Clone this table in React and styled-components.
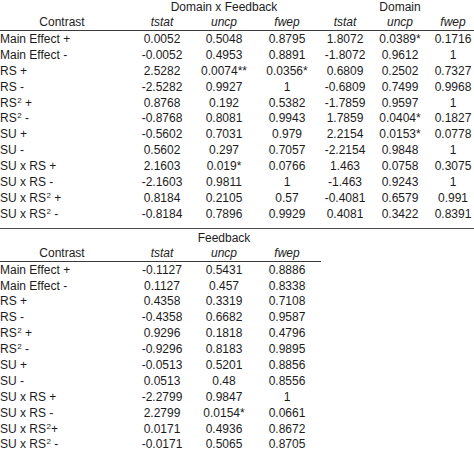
import React from "react";
import styled, { createGlobalStyle } from "styled-components";

const Global = createGlobalStyle`
  html, body { margin: 0; padding: 0; background: #fff; overflow: hidden; }
  body { font-family: "Liberation Sans", Arial, sans-serif; color: #1c1c1c; }
`;

const COLS = "124px 76px 48px 78px 38px 72px 34px";

const Page = styled.div`
  width: 474px;
  height: 457px;
  font-size: 12px;
  display: flex;
  flex-direction: column;
`;

const Section = styled.section`
  display: flex;
  flex-direction: column;
  margin-top: ${(p) => p.$top || 0}px;
`;

const Head = styled.div`
  width: ${(p) => p.$lineWidth}px;
  border-bottom: 1px solid #3a3a3a;
`;

const Row = styled.div`
  display: grid;
  grid-template-columns: ${COLS};
  height: ${(p) => p.$h || 15.9}px;
  line-height: ${(p) => p.$h || 15.9}px;
  align-items: center;
  white-space: nowrap;
`;

const Cell = styled.div`
  justify-self: ${(p) => (p.$left ? "start" : "center")};
  font-style: ${(p) => (p.$italic ? "italic" : "normal")};
  grid-column: ${(p) => p.$col || "auto"};
`;

const Body = styled.div`
  padding-top: 1px;
  padding-bottom: ${(p) => p.$bottom || 0}px;
  border-bottom: ${(p) => (p.$line ? "1.5px solid #4a4a4a" : "none")};
`;

const Sup = styled.sup`
  font-size: 8px;
  line-height: 0;
  vertical-align: 4px;
  margin-left: 0.5px;
`;

const top = [
  [["Main Effect +"], "0.0052", "0.5048", "0.8795", "1.8072", "0.0389*", "0.1716"],
  [["Main Effect -"], "-0.0052", "0.4953", "0.8891", "-1.8072", "0.9612", "1"],
  [["RS +"], "2.5282", "0.0074**", "0.0356*", "0.6809", "0.2502", "0.7327"],
  [["RS -"], "-2.5282", "0.9927", "1", "-0.6809", "0.7499", "0.9968"],
  [["RS", " +"], "0.8768", "0.192", "0.5382", "-1.7859", "0.9597", "1"],
  [["RS", " -"], "-0.8768", "0.8081", "0.9943", "1.7859", "0.0404*", "0.1827"],
  [["SU +"], "-0.5602", "0.7031", "0.979", "2.2154", "0.0153*", "0.0778"],
  [["SU -"], "0.5602", "0.297", "0.7057", "-2.2154", "0.9848", "1"],
  [["SU x RS +"], "2.1603", "0.019*", "0.0766", "1.463", "0.0758", "0.3075"],
  [["SU x RS -"], "-2.1603", "0.9811", "1", "-1.463", "0.9243", "1"],
  [["SU x RS", " +"], "0.8184", "0.2105", "0.57", "-0.4081", "0.6579", "0.991"],
  [["SU x RS", " -"], "-0.8184", "0.7896", "0.9929", "0.4081", "0.3422", "0.8391"],
];

const bottom = [
  [["Main Effect +"], "-0.1127", "0.5431", "0.8886"],
  [["Main Effect -"], "0.1127", "0.457", "0.8338"],
  [["RS +"], "0.4358", "0.3319", "0.7108"],
  [["RS -"], "-0.4358", "0.6682", "0.9587"],
  [["RS", " +"], "0.9296", "0.1818", "0.4796"],
  [["RS", " -"], "-0.9296", "0.8183", "0.9895"],
  [["SU +"], "-0.0513", "0.5201", "0.8856"],
  [["SU -"], "0.0513", "0.48", "0.8556"],
  [["SU x RS +"], "-2.2799", "0.9847", "1"],
  [["SU x RS -"], "2.2799", "0.0154*", "0.0661"],
  [["SU x RS", "+"], "0.0171", "0.4936", "0.8672"],
  [["SU x RS", " -"], "-0.0171", "0.5065", "0.8705"],
];

function Label({ parts }) {
  if (parts.length === 1) return <Cell $left>{parts[0]}</Cell>;
  return (
    <Cell $left>
      {parts[0]}
      <Sup>2</Sup>
      {parts[1]}
    </Cell>
  );
}

function DataRows({ rows }) {
  return rows.map(([label, ...vals], i) => (
    <Row key={i}>
      <Label parts={label} />
      {vals.map((v, j) => (
        <Cell key={j}>{v}</Cell>
      ))}
    </Row>
  ));
}

export default function App() {
  return (
    <Page>
      <Global />
      <Section>
        <Head $lineWidth={474}>
          <Row $h={15}>
            <Cell $col="3">Domain x Feedback</Cell>
            <Cell $col="6">Domain</Cell>
          </Row>
          <Row $h={15}>
            <Cell>Contrast</Cell>
            <Cell $italic>tstat</Cell>
            <Cell $italic>uncp</Cell>
            <Cell $italic>fwep</Cell>
            <Cell $italic>tstat</Cell>
            <Cell $italic>uncp</Cell>
            <Cell $italic>fwep</Cell>
          </Row>
        </Head>
        <Body $bottom={5} $line>
          <DataRows rows={top} />
        </Body>
      </Section>
      <Section $top={2}>
        <Head $lineWidth={321}>
          <Row $h={15}>
            <Cell $col="3">Feedback</Cell>
          </Row>
          <Row $h={15}>
            <Cell>Contrast</Cell>
            <Cell $italic>tstat</Cell>
            <Cell $italic>uncp</Cell>
            <Cell $italic>fwep</Cell>
          </Row>
        </Head>
        <Body>
          <DataRows rows={bottom} />
        </Body>
      </Section>
    </Page>
  );
}
